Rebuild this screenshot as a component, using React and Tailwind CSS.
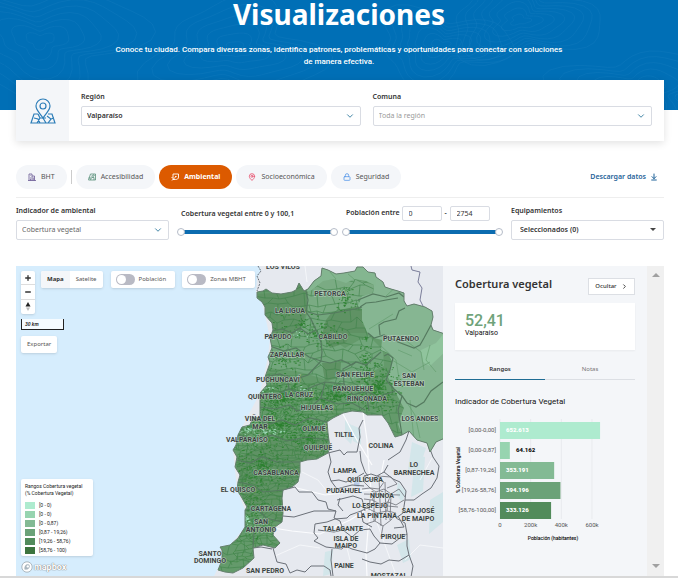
import { useState } from "react";
import clsx from "clsx";
import { MapPin, Lock, ChevronDown, ChevronRight, ArrowDownToLine, Plus, Minus } from "lucide-react";

const TABS = [
  { id: "bht", label: "BHT", icon: BuildingsIcon, color: "text-[#6b5b95]" },
  { id: "acc", label: "Accesibilidad", icon: AccessIcon, color: "text-[#4f8a72]" },
  { id: "amb", label: "Ambiental", icon: LeafIcon, color: "text-[#3c8468]" },
  { id: "soc", label: "Socioeconómica", icon: MapPin, color: "text-[#e8506e]" },
  { id: "seg", label: "Seguridad", icon: Lock, color: "text-[#5b9bea]" },
];

const LEGEND = [
  { color: "#aeebcf", label: "[0 - 0)" },
  { color: "#97d4b0", label: "[0 - 0)" },
  { color: "#83ba94", label: "[0 - 0,87)" },
  { color: "#6ba278", label: "[0,87 - 19,26)" },
  { color: "#528b5b", label: "[19,26 - 58,76)" },
  { color: "#3d743e", label: "[58,76 - 100)" },
];

const BARS = [
  { range: "[0,00-0,00]", value: 652613, text: "652.613", color: "#aeebcf" },
  { range: "[0,00-0,87]", value: 64162, text: "64.162", color: "#97d4b0" },
  { range: "[0,87-19,26]", value: 353191, text: "353.191", color: "#83ba94" },
  { range: "[19,26-58,76]", value: 394196, text: "394.196", color: "#6ba278" },
  { range: "[58,76-100,00]", value: 333126, text: "333.126", color: "#528b5b" },
];

// ===== Map geometry
const REGION =
  "M257 292L263 291L266 289L272 293L281 294L292 292L296 290L299 283L304 291L308 289L314 281L321 276L322 268L328 270L336 274L344 273L355 271L357 267L363 267L368 272L375 273L376 277L383 282L385 287L391 289L398 291L404 293L404 301L407 306L414 304L425 307L432 311L433 317L431 325L433 330L445 334L445 438L436 442L430 452L427 443L417 440L409 431L402 435L395 437L388 423L382 415L367 415L363 412L352 411L343 413L333 418L327 422L328 433L330 448L328 453L317 459L307 460L300 462L300 472L298 482L292 487L283 490L282 498L283 513L282 522L275 527L273 535L280 543L275 548L263 545L253 548L254 558L243 568L233 573L225 572L218 570L222 560L222 550L220 547L230 545L238 538L245 527L245 510L247 507L242 498L237 490L238 482L240 475L235 467L237 457L233 450L236 445L238 435L242 427L250 425L253 417L260 418L260 407L260 393L267 385L265 377L270 363L268 357L272 348L270 338L273 330L272 323L265 315L265 307L262 302L257 298Z";

const LAND =
  "M258 260L261 270L257 280L256 292L262 302L270 338L268 357L260 393L242 427L233 450L237 490L245 510L245 527L230 545L220 547L221 562L212 580L450 580L450 260Z";

const EAST =
  "M358 306L362 309L362 320L367 332L374 338L382 340L381 350L388 353L392 362L388 377L395 391L401 403L404 408L398 424L402 435L409 431L417 440L427 443L430 452L445 440L445 255L372 255L374 286L373 293L362 296Z";

const CENTER = "M322 268L314 281L306 290L308 311L318 318L334 313L355 309L362 307L358 300L373 293L374 285L354 279L334 279L323 280Z";

const TOP = "M322 262L376 262L376 286L366 281L354 279L346 283L334 279L323 281L312 290L306 292L318 276Z";

const DARK_PATCHES = [
  "M257 294L292 292L299 283L308 291L306 312L300 330L285 338L272 333L265 315Z",
  "M332 312L358 306L363 312L362 323L368 333L350 333L346 343L330 348L322 335L326 320Z",
  "M322 363L341 362L340 378L325 381Z",
  "M238 458L270 440L328 440L328 453L300 462L298 482L283 490L282 522L247 507L238 482Z",
];

const GREEN_BORDERS = [
  "M306 291L308 300L306 312L311 319L316 330L321 342L322 352L321 361L330 363L341 360L352 365L356 362",
  "M308 312L318 315L334 313L355 309L362 307",
  "M358 300L373 294L386 297L399 293L404 297",
  "M360 307L366 303L376 302L386 300L398 298",
  "M380 335L379 325L384 322L396 319L399 311L405 308",
  "M368 333L374 338L384 335L398 342L414 348L420 345L424 338L431 325",
  "M384 356L388 354L393 358L390 370L386 380L394 389L402 396L407 403L416 407L424 402L431 391L443 382",
  "M272 331L282 329L292 333L300 328L308 334L316 330",
  "M270 346L284 351L296 348L309 357L321 361",
  "M265 377L280 374L293 380L308 375L321 361",
  "M260 393L278 394L289 389L300 393L314 386L325 382L344 384L353 395L366 391L378 397L395 391",
  "M260 407L276 409L289 405L297 411L312 406L321 398L338 404L352 403L365 410",
  "M253 418L269 424L282 420L295 425L310 418L327 422",
  "M238 435L256 440L272 435L287 441L306 437L329 440",
  "M237 460L250 463L262 457L277 462L300 462",
  "M238 482L252 485L263 492L283 490",
  "M245 510L258 509L266 518L282 522",
  "M245 527L254 532L253 548",
  "M321 398L325 382M289 389L287 375M344 384L343 369L356 362L366 365L381 352",
  "M366 391L369 411M402 396L398 410L402 435",
];

const SOUTH_BORDERS = [
  "M328 453L340 450L344 455L347 452L357 452L360 437L359 428L363 420",
  "M329 453L331 462L328 472L331 481L339 480L346 482L354 479L364 473",
  "M360 451L361 461L365 472L368 476",
  "M388 465L384 472L393 479L400 482L406 491L405 500L414 500L422 494L431 488L437 478L439 466L433 457L430 449",
  "M388 460L400 452L406 440L409 431",
  "M384 472L377 476L371 474L364 476M331 481L337 489L344 487L352 485L364 486",
  "M283 490L295 487L299 492L312 492L318 500L326 502L328 509L336 511L334 518L340 521",
  "M283 516L294 517L304 514L314 511L326 511L336 511",
  "M340 498L338 505L343 511M337 500L353 496L362 499L365 511",
  "M315 524L327 522L335 519L347 518L350 515L361 511L367 508",
  "M315 524L314 533L318 538L314 541L326 547L342 549L345 546L352 549L367 553L375 549L380 543L374 536L370 529L360 530L352 537L343 530L334 532L318 530",
  "M332 549L331 560L333 576M380 543L392 544L400 538L407 534L405 523L396 518L403 513L405 500",
  "M407 534L407 546L409 555L399 561L389 560L381 564L370 562L362 559",
  "M273 548L277 562L286 564L290 573L297 570L305 572L311 566L324 566L330 570L331 576",
  "M409 555L413 566L411 577M340 521L343 530M361 511L363 522L372 527",
  "M253 548L261 547L272 549M398 516L404 527L394 528",
];

// Dense communes of Santiago
const METRO =
  "M364 476L371 480L378 476L384 482L379 489L370 488L364 482ZM378 476L391 477L397 484L387 488M362 489L370 488L376 492L372 500L364 499M376 492L384 489L391 494L388 502L380 504L372 500M391 494L399 489L405 497M388 502L396 505L404 500M370 500L369 509L377 513L387 511L388 502M377 513L375 521L383 526L391 520L396 513L387 511M360 506L369 509M375 521L366 524M383 526L381 537M374 492L374 521M379 477L381 526M385 482L386 520M391 494L390 520M364 494L400 495M366 504L398 507";

const LABELS = [
  ["LOS VILOS", 283, 269], ["PETORCA", 330, 296], ["LA LIGUA", 290, 313], ["PAPUDO", 278, 339],
  ["CABILDO", 333, 339], ["PUTAENDO", 401, 341], ["ZAPALLAR", 287, 357], ["SAN FELIPE", 355, 377],
  ["SAN", 409, 378], ["ESTEBAN", 409, 386], ["PUCHUNCAVÍ", 278, 382], ["PANQUEHUE", 353, 391],
  ["QUINTERO", 265, 399], ["LA CRUZ", 299, 397], ["RINCONADA", 367, 401], ["HIJUELAS", 317, 410],
  ["VIÑA DEL", 260, 421], ["MAR", 260, 429], ["LOS ANDES", 420, 421], ["OLMUÉ", 314, 431],
  ["TILTIL", 344, 437], ["VALPARAÍSO", 247, 442], ["QUILPUÉ", 318, 450], ["COLINA", 381, 448],
  ["LO", 414, 467], ["BARNECHEA", 414, 475], ["LAMPA", 345, 473], ["CASABLANCA", 276, 475],
  ["QUILICURA", 365, 482], ["EL QUISCO", 238, 492], ["PUDAHUEL", 344, 493], ["ÑUÑOA", 382, 498],
  ["LO ESPEJO", 370, 508], ["CARTAGENA", 271, 511], ["LA PINTANA", 377, 518], ["SAN JOSÉ", 418, 513],
  ["DE MAIPO", 418, 521], ["SAN", 261, 524], ["ANTONIO", 261, 532], ["TALAGANTE", 343, 531],
  ["ISLA DE", 346, 541], ["MAIPO", 346, 548], ["PIRQUE", 393, 539], ["SANTO", 210, 556],
  ["DOMINGO", 210, 563], ["SAN PEDRO", 265, 573], ["PAINE", 344, 568], ["MOSTAZAL", 389, 578],
];

const rand = (n) => {
  const v = Math.sin(n * 12.9898) * 43758.5453;
  return v - Math.floor(v);
};

// Irregular mesh used for the census zones
function buildMesh(x0, y0, x1, y1, size, seed) {
  const cols = Math.ceil((x1 - x0) / size) + 1;
  const rows = Math.ceil((y1 - y0) / size) + 1;
  const point = (c, r) => {
    const k = seed + c * 37 + r * 101;
    return [x0 + c * size + (rand(k) - 0.5) * size * 0.9, y0 + r * size + (rand(k + 7) - 0.5) * size * 0.9].map(Math.round).join(" ");
  };
  let d = "";
  for (let r = 0; r < rows; r++) {
    for (let c = 0; c < cols; c++) {
      d += `M${point(c, r)}L${point(c + 1, r)}`;
      if ((c + r) % 2) d += `M${point(c, r)}L${point(c, r + 1)}`;
    }
  }
  return d;
}

function buildSpecks(clusters) {
  let d = "";
  clusters.forEach(([cx, cy, rx, ry, n], i) => {
    for (let j = 0; j < n; j++) {
      const a = rand(i * 991 + j) * 6.283;
      const q = rand(i * 577 + j + 0.5);
      d += `M${(cx + Math.cos(a) * rx * q).toFixed(1)} ${(cy + Math.sin(a) * ry * q).toFixed(1)}h${(0.6 + rand(j + i) * 1.6).toFixed(1)}`;
    }
  });
  return d;
}

const MESH = buildMesh(214, 280, 395, 576, 8, 3);
const FINE_MESH = buildMesh(232, 385, 335, 560, 5, 11);
const SPECKS = buildSpecks([
  [283, 400, 30, 18, 240], [320, 335, 26, 12, 110], [345, 300, 12, 14, 50], [378, 388, 24, 26, 320],
  [335, 396, 34, 10, 190], [280, 425, 44, 16, 340], [365, 360, 6, 26, 70], [262, 465, 26, 30, 240],
  [310, 438, 20, 18, 150], [253, 508, 12, 34, 110], [300, 325, 32, 12, 60], [283, 360, 20, 16, 60],
]);
const PALE_SPECKS = buildSpecks([
  [250, 430, 14, 6, 30], [266, 388, 8, 6, 12], [297, 335, 12, 4, 8], [305, 390, 12, 5, 12],
  [246, 519, 3, 6, 16], [272, 432, 14, 3, 22], [364, 385, 8, 6, 6],
]);

function MapCanvas() {
  return (
    <svg viewBox="16 266 427 310" preserveAspectRatio="xMaxYMid slice" className="absolute inset-0 size-full" role="img" aria-label="Mapa de cobertura vegetal">
      <defs>
        <clipPath id="region"><path d={REGION} /></clipPath>
      </defs>
      <rect x="-600" y="0" width="1200" height="900" fill="#d6edfd" />
      <path d={LAND} fill="#e6e9ef" />
      <path d="M345 420l10 8l-4 16l-6-6zM352 425l9 4v16l-8-4zM412 442l14 6l-6 18l-12 4zM430 500l13-8v30l-14 12zM398 482l8 10l-4 10l-6-8zM397 545l12-6l2 20l-8 4zM325 552l8-2l-2 24l-8 2zM415 455l10 2l-2 34l-12 6z" fill="#d3e6ea" />
      <path d="M354 480l6 0l-1 7l-5-1z" fill="#b7cbea" />
      <g fill="none" stroke="#fbfcfe">
        <path d="M363 412L367 440L369 470L372 500L368 530L366 555L367 576M343 414L354 435L372 465M284 485L305 490L325 495L370 490M273 528L292 531L320 534L350 520L374 505M384 460L380 480" strokeWidth="1.2" />
        <path d="M305 266L307 282M405 560L420 545L443 548M396 575L385 545L376 520M275 556L300 545L320 548M350 560L345 540M432 458L420 480M302 472L318 480L330 495" strokeWidth="0.7" />
      </g>
      <g fill="none" stroke="#6b7078" strokeWidth="1">
        {SOUTH_BORDERS.map((d) => <path key={d} d={d} />)}
        <path d={METRO} stroke="#6c6f76" strokeWidth="0.8" />
        <path d="M258 266L261 271L257 276L260 283L257 291" strokeDasharray="2 1" />
        <path d="M411 266L412 270L420 272L418 282L422 288L420 300L423 306" stroke="#7b7e9a" />
      </g>

      <path d={REGION} fill="#649a6b" />
      <g clipPath="url(#region)">
        <path d={CENTER} fill="#7aab83" />
        <path d="M308 312L332 313L326 335L345 348L368 335L383 350L384 366L345 385L300 372L270 368L270 340L300 332Z" fill="#72a67c" />
        {DARK_PATCHES.map((d) => <path key={d} d={d} fill="#5f9264" />)}
        <path d={MESH} fill="none" stroke="#40834a" strokeWidth="0.6" />
        <path d={FINE_MESH} fill="none" stroke="#39833f" strokeWidth="0.5" />
        <path d={EAST} fill="#86b692" />
        <path d={TOP} fill="#84b690" />
        <path d="M445 332L436 343L421 350L423 362L430 366L445 352" fill="#90c49d" />
        <path d="M386 296L399 284M369 329L393 314M405 340L421 352L424 370M380 345L396 360L400 385M392 360L412 372L430 362M400 392L415 415L420 438M410 400L414 440M398 350L412 356M430 345L426 360L436 372M330 272L336 279M348 274L354 279" fill="none" stroke="#5f9a69" strokeWidth="0.6" />
        <path d={SPECKS} stroke="#2c8130" strokeWidth="0.9" />
        <path d={PALE_SPECKS} stroke="#a8e8c8" strokeWidth="0.8" />
        <g fill="none" stroke="#557a5f" strokeWidth="1.2">
          {GREEN_BORDERS.map((d) => <path key={d} d={d} />)}
        </g>
      </g>
      <path d={REGION} fill="none" stroke="#66806f" strokeWidth="1" />

      <g fontFamily="Roboto, sans-serif" fontSize="7" fontWeight="700" textAnchor="middle" fill="#3c4443" stroke="#e6ecea" strokeOpacity="0.55" strokeWidth="1.2" paintOrder="stroke">
        {LABELS.map(([name, x, y]) => <text key={`${name}${y}`} x={x} y={y}>{name}</text>)}
      </g>
    </svg>
  );
}

function HeaderTexture() {
  const rings = [];
  const blobs = [[235, 50, 6, 9], [520, 20, 8, 6], [440, 45, 7, 6], [40, 40, 7, 9], [640, 90, 6, 8]];
  blobs.forEach(([cx, cy, count, step], b) => {
    for (let i = 1; i <= count; i++) {
      const pts = [];
      for (let a = 0; a <= 48; a++) {
        const t = (a / 48) * Math.PI * 2;
        const w = 1 + 0.26 * Math.sin(t * 3 + b) + 0.14 * Math.sin(t * 5 + b * 2 + i * 0.25);
        pts.push(`${(cx + Math.cos(t) * i * step * 1.5 * w).toFixed(1)} ${(cy + Math.sin(t) * i * step * 0.8 * w).toFixed(1)}`);
      }
      rings.push(`M${pts.join("L")}Z`);
    }
  });
  return (
    <svg viewBox="0 0 678 110" preserveAspectRatio="xMidYMid slice" className="absolute inset-0 size-full" aria-hidden="true">
      <path d={rings.join("")} fill="none" stroke="#1c80c2" strokeOpacity="0.4" strokeWidth="0.7" />
    </svg>
  );
}

// ===== Icons
function LocationIcon() {
  return (
    <svg viewBox="0 0 26 26" className="size-[26px]" fill="none" stroke="#2c7db8" strokeWidth="1.2" aria-hidden="true">
      <path d="M13 20C9 14 6 12 6 8a7 7 0 0 1 14 0c0 4-3 6-7 12z" />
      <circle cx="13" cy="8" r="3" />
      <path d="M8 16H4L1 25h24l-3-9h-4M4 20l4 1l2 4M8 16l2 4l-3 5M13 20l3 5M17 18l4 3l-3 4M21 21l3-1M10 20h6" />
    </svg>
  );
}

function BuildingsIcon({ className }) {
  return (
    <svg viewBox="0 0 16 16" className={className} fill="none" stroke="currentColor" strokeWidth="1.6" aria-hidden="true">
      <path d="M0 15h16M2 15V2h6v13M8 6h5v9M5 5v1M5 8v1M5 11v4M10.500 9v6" />
    </svg>
  );
}

function AccessIcon({ className }) {
  return (
    <svg viewBox="0 0 16 16" className={className} fill="none" stroke="currentColor" strokeWidth="1.5" aria-hidden="true">
      <path d="M5 2h10v12H1l4-12zM1 10h5M8 5v4h4v5M5 14l2-5" />
      <circle cx="11" cy="5" r="1.500" />
    </svg>
  );
}

function LeafIcon({ className }) {
  return (
    <svg viewBox="0 0 16 16" className={className} fill="none" stroke="currentColor" strokeWidth="1.8" aria-hidden="true">
      <path d="M4 2h11v6c0 4-3 5-6 5H4zM2 15l3-3l5-5M8 7h3M1 9h2" />
    </svg>
  );
}

function SelectField({ id, label, value, muted, caret }) {
  return (
    <div className="flex min-w-0 flex-1 flex-col">
      <label htmlFor={id} className="mb-1 text-[7px] leading-[10px] font-semibold text-[#333]">{label}</label>
      <div className="relative">
        <select id={id} className={clsx("block h-5 w-full appearance-none rounded-xs border border-[#d9dce3] bg-white text-[7px] outline-none", caret ? "px-2" : "px-[5px]", muted || "font-semibold text-[#333]")}>
          <option>{value}</option>
        </select>
        {caret ? (
          <span className="pointer-events-none absolute top-2 right-2 border-x-[3px] border-t-[3px] border-x-transparent border-t-[#444]" />
        ) : (
          <ChevronDown className="pointer-events-none absolute top-[5px] right-1.5 size-2.5 text-[#1f6f95]" strokeWidth={2} />
        )}
      </div>
    </div>
  );
}

const THUMB =
  "pointer-events-none absolute inset-0 m-0 w-full appearance-none bg-transparent [&::-webkit-slider-thumb]:pointer-events-auto [&::-webkit-slider-thumb]:size-2 [&::-webkit-slider-thumb]:appearance-none [&::-webkit-slider-thumb]:rounded-full [&::-webkit-slider-thumb]:border [&::-webkit-slider-thumb]:border-[#b5bcc8] [&::-webkit-slider-thumb]:bg-white";

function RangeSlider({ label, max }) {
  return (
    <div className="relative -mx-1 flex h-2 items-center">
      <div className="mx-1 h-1 flex-1 bg-[#0c6cb0]" />
      <input type="range" aria-label={`${label} mínimo`} min="0" max={max} defaultValue="0" className={THUMB} />
      <input type="range" aria-label={`${label} máximo`} min="0" max={max} defaultValue={max} className={THUMB} />
    </div>
  );
}

function Toggle({ label }) {
  return (
    <label className="flex h-[17px] items-center gap-1 rounded-xs bg-white px-[5px] text-[6px] text-[#555] shadow-sm">
      <input type="checkbox" className="peer sr-only" />
      <span className="flex h-[11px] w-[19px] items-center rounded-full bg-[#b9bac4] p-px peer-checked:justify-end">
        <span className="size-[9px] rounded-full bg-white" />
      </span>
      <span className="whitespace-nowrap pr-1">{label}</span>
    </label>
  );
}

function RangesChart() {
  const scale = 92 / 600000;
  return (
    <svg viewBox="0 0 180 126" className="block w-full" fontFamily="Roboto, sans-serif" fontSize="6" role="img" aria-label="Población por rango de cobertura vegetal">
      {[0, 200, 400, 600].map((k) => (
        <g key={k}>
          <line x1={45 + k * 1000 * scale} x2={45 + k * 1000 * scale} y1="0" y2="100" stroke="#e4e7ea" strokeWidth="0.7" />
          <text x={45 + k * 1000 * scale} y="108" textAnchor="middle" fill="#555">{k ? `${k}k` : "0"}</text>
        </g>
      ))}
      {BARS.map((b, i) => {
        const outside = b.value < 100000;
        return (
          <g key={b.range}>
            <rect x="45" y={3 + i * 20} width={b.value * scale} height="17" fill={b.color} />
            <text x="41" y={13 + i * 20} textAnchor="end" fill="#555">{b.range}</text>
            <text x={outside ? 61 : 51} y={13 + i * 20} fontWeight="900" fill={outside ? "#111" : "#fff"}>{b.text}</text>
          </g>
        );
      })}
      <text x="98" y="121" textAnchor="middle" fontSize="5" fill="#111" stroke="#111" strokeWidth="0.1">Población (habitantes)</text>
      <text transform="translate(5 51) rotate(-90)" textAnchor="middle" fontSize="5" fontWeight="700" fill="#222">% Cobertura Vegetal</text>
    </svg>
  );
}

export default function App() {
  const [tab, setTab] = useState("amb");
  const [view, setView] = useState("rangos");
  const [base, setBase] = useState("mapa");

  return (
    <div className="border-b-2 border-[#d8d8d8] bg-white font-['Noto_Sans',sans-serif] text-[#333]">
      <header className="relative bg-[#006fb6] pb-[42px] text-center text-white">
        <HeaderTexture />
        <h1 className="relative text-[28px] leading-7 font-bold">Visualizaciones</h1>
        <p className="relative mx-auto mt-4 max-w-[452px] font-[Roboto,sans-serif] text-[8px] leading-3 font-medium">
          Conoce tu ciudad. Compara diversas zonas, identifica patrones, problemáticas y oportunidades para conectar con soluciones de manera efectiva.
        </p>
      </header>

      <main className="px-4 pr-3.5">
        {/* Location */}
        <section className="relative -mt-[30px] flex h-[61px] bg-white shadow-[0_2px_8px_rgba(0,0,0,0.12)]">
          <div className="flex w-[53px] items-center justify-center bg-[#f4f6f9]"><LocationIcon /></div>
          <div className="flex flex-1 gap-3 px-3 pt-3">
            <SelectField id="region-select" label="Región" value="Valparaíso" />
            <SelectField id="comuna" label="Comuna" value="Toda la región" muted="text-[#999]" />
          </div>
        </section>

        {/* Category tabs */}
        <nav className="mt-6 flex items-center border-b border-[#eeeeee] pb-2">
          {TABS.map(({ id, label, icon: Icon, color }) => (
            <div key={id} className="flex items-center">
              <button
                onClick={() => setTab(id)}
                className={clsx("mr-1 flex h-6 items-center gap-[5px] rounded-full px-3 text-[7px]", tab === id ? "bg-[#dc5a00] font-bold text-white" : "bg-[#f4f6f9] text-[#555]")}
              >
                <Icon className={clsx("size-2", tab === id ? "text-white" : color)} strokeWidth={2.5} />
                {label}
              </button>
              {id === "bht" && <span className="mr-1 h-3.5 w-px bg-[#ccc]" />}
            </div>
          ))}
          <a href="#descargar" className="mr-1.5 ml-auto flex items-center gap-1 text-[7px] font-semibold text-[#1f6399]">
            Descargar datos <ArrowDownToLine className="size-2" strokeWidth={3} />
          </a>
        </nav>

        {/* Filters */}
        <section className="grid grid-cols-4 gap-3 pt-2">
          <SelectField id="indicador" label="Indicador de ambiental" value="Cobertura vegetal" muted="text-[#666]" />
          <div>
            <p className="pt-1 pb-2.5 text-[7px] leading-2 font-semibold">Cobertura vegetal entre 0 y 100,1</p>
            <RangeSlider label="Cobertura vegetal" max="100" />
          </div>
          <div>
            <div className="flex h-[15px] items-center gap-0.5 text-[7px] font-semibold">
              <label htmlFor="min-pop" className="whitespace-nowrap">Población entre</label>
              <input id="min-pop" defaultValue="0" className="h-[15px] w-10 rounded-xs border border-[#d9dce3] px-1.5 font-normal" />
              <span className="w-1 text-center">-</span>
              <input aria-label="Población máxima" defaultValue="2754" className="h-[15px] w-10 rounded-xs border border-[#d9dce3] px-1.5 font-normal" />
            </div>
            <div className="pt-[7px]"><RangeSlider label="Población" max="2754" /></div>
          </div>
          <SelectField id="equip" label="Equipamientos" value="Seleccionados (0)" caret />
        </section>

        {/* Map + indicators */}
        <section className="mt-[26px] flex h-[310px]">
          <div className="relative min-w-0 flex-1 overflow-hidden bg-[#d6edfd]">
            <MapCanvas />
            <div className="absolute inset-0 flex flex-col items-start px-[5px] pt-[5px] pb-[3px]">
              <div className="flex items-start">
                <div className="mr-1.5 flex w-3.5 flex-col divide-y divide-[#ddd] rounded-xs bg-white shadow-sm">
                  <button aria-label="Acercar" className="flex h-3.5 items-center justify-center"><Plus className="size-2" strokeWidth={4} /></button>
                  <button aria-label="Alejar" className="flex h-[15px] items-center justify-center"><Minus className="size-2" strokeWidth={4} /></button>
                  <button aria-label="Orientar al norte" className="flex h-3.5 items-center justify-center">
                    <svg viewBox="0 0 8 10" className="h-2.5 w-2"><path d="M4 0L6.500 4.500H1.500z" fill="#222" /><path d="M4 9L6 5.500H2z" fill="#bbb" /></svg>
                  </button>
                </div>
                <div className="mr-2 flex h-[17px] overflow-hidden rounded-xs bg-white text-[6px] shadow-sm">
                  <button onClick={() => setBase("mapa")} className={clsx("px-1.5", base === "mapa" ? "bg-[#f4f6f9] font-bold" : "text-[#555]")}>Mapa</button>
                  <button onClick={() => setBase("satelite")} className={clsx("px-1.5", base === "satelite" ? "bg-[#f4f6f9] font-bold" : "text-[#555]")}>Satelite</button>
                </div>
                <div className="flex gap-[7px]">
                  <Toggle label="Población" />
                  <Toggle label="Zonas MBHT" />
                </div>
              </div>
              <div className="mt-[5px] h-[11px] w-[43px] border border-t-0 border-[#222] bg-white/75 pl-[3px] font-[Roboto,sans-serif] text-[5px] leading-[10px] font-bold italic">30 km</div>
              <button className="mt-1.5 h-[17px] rounded-xs bg-white px-1.5 text-[6px] text-[#555] shadow-sm">Exportar</button>

              <div className="mt-auto h-[77px] w-[72px] rounded-xs bg-white px-1 pt-1 font-[Roboto,sans-serif] text-[5px] text-[#222] shadow-sm">
                <p className="leading-[7px] whitespace-nowrap">Rangos Cobertura vegetal<br />(% Cobertura Vegetal)</p>
                <ul className="mt-1">
                  {LEGEND.map((l, i) => (
                    <li key={i} className="mb-px flex h-[8px] items-center gap-1 leading-[8px] last:mb-0">
                      <span className="h-[7px] w-2.5" style={{ backgroundColor: l.color }} />
                      {l.label}
                    </li>
                  ))}
                </ul>
              </div>
              <a href="#mapbox" className="mt-[5px] flex h-3 items-center gap-px font-[Roboto,sans-serif] text-[9px] leading-3 font-bold text-white [text-shadow:0_0_1px_#777,0_0_1px_#777]">
                <svg viewBox="0 0 12 12" className="size-3">
                  <circle cx="6" cy="6" r="5.200" fill="#fff" stroke="#9ba8b0" strokeWidth="0.8" />
                  <path d="M3.500 8.500C3 5 5 3 7.200 3.300C9.500 4 9 6.500 7.800 7.500C6.500 8.700 5 8.800 3.500 8.500z" fill="#a9b6be" />
                  <circle cx="6.800" cy="5.400" r="1.200" fill="#fff" />
                </svg>
                mapbox
              </a>
            </div>
          </div>

          <aside className="w-[204px] bg-[#f4f6f9] px-3 pt-3">
            <div className="flex items-start justify-between">
              <h2 className="text-[11px] leading-3 font-semibold">Cobertura vegetal</h2>
              <button className="flex h-[17px] w-[47px] items-center justify-center gap-1 border border-[#dcdfe4] bg-white text-[6px] font-medium">
                Ocultar <ChevronRight className="size-[7px]" strokeWidth={3} />
              </button>
            </div>
            <div className="mt-2 h-[47px] bg-white px-2.5 pt-2.5 font-[Roboto,sans-serif] shadow-xs">
              <p className="text-[16px] leading-4 font-medium text-[#6fa37a]">52,41</p>
              <p className="text-[7px] leading-[9px] text-[#111]">Valparaíso</p>
            </div>
            <div className="mt-2.5 grid grid-cols-2 text-[6px]">
              {[["rangos", "Rangos"], ["notas", "Notas"]].map(([id, label]) => (
                <button key={id} onClick={() => setView(id)} className={clsx("h-5 border-b", view === id ? "border-[#1f6c94] font-semibold" : "border-[#dcdfe4] text-[#777]")}>
                  {label}
                </button>
              ))}
            </div>
            <h3 className="mt-[17px] mb-3 font-[Roboto,sans-serif] text-[8px] leading-[10px] text-[#111]">Indicador de Cobertura Vegetal</h3>
            <RangesChart />
          </aside>

          <div className="flex w-[17px] flex-col items-center justify-between bg-[#f0f0f0] pt-[7px] pb-2">
            <span className="border-x-4 border-b-4 border-x-transparent border-b-[#a0a0a0]" />
            <span className="border-x-4 border-t-4 border-x-transparent border-t-[#a0a0a0]" />
          </div>
        </section>
      </main>
    </div>
  );
}
